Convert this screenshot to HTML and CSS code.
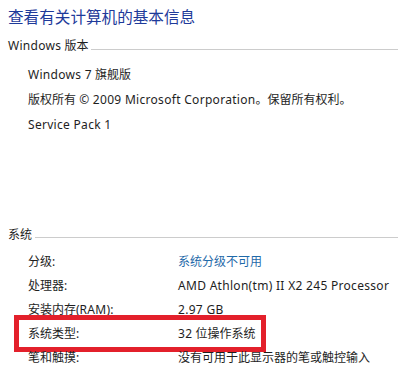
FILE: index.html
```html
<!DOCTYPE html>
<html lang="zh-CN">
<head>
<meta charset="utf-8">
<title>系统</title>
<link rel="stylesheet" href="styles.css">
</head>
<body>
<div class="page">
  <h1 class="title">查看有关计算机的基本信息</h1>

  <section class="group">
    <div class="heading"><span class="en">Windows</span> 版本</div>
    <div class="lines">
      <div class="line"><span class="en">Windows 7</span> 旗舰版</div>
      <div class="line">版权所有 <span class="en">© 2009 Microsoft Corporation</span>。保留所有权利。</div>
      <div class="line"><span class="en">Service Pack 1</span></div>
    </div>
  </section>

  <section class="group system">
    <div class="heading">系统</div>
    <div class="rows">
      <div class="row"><span class="label">分级:</span><span class="value link">系统分级不可用</span></div>
      <div class="row"><span class="label">处理器:</span><span class="value en">AMD Athlon(tm) II X2 245 Processor</span></div>
      <div class="row"><span class="label">安装内存(<span class="en">RAM</span>):</span><span class="value en">2.97 GB</span></div>
      <div class="row highlighted"><span class="label">系统类型:</span><span class="value"><span class="en">32</span> 位操作系统</span><span class="mark"></span></div>
      <div class="row"><span class="label">笔和触摸:</span><span class="value">没有可用于此显示器的笔或触控输入</span></div>
    </div>
  </section>
</div>
</body>
</html>
```

FILE: styles.css
```css
html, body {
  margin: 0;
  padding: 0;
  background: #ffffff;
}

body {
  font-family: "Noto Sans", "Noto Sans CJK SC", sans-serif;
  font-size: 12px;
  color: #1e1e1e;
  width: 399px;
  height: 374px;
  overflow: hidden;
}

.en {
  letter-spacing: 0.3px;
}

.page {
  padding-top: 6px;
}

.title {
  margin: 0;
  padding-left: 8px;
  font-family: "Noto Sans CJK SC", sans-serif;
  font-size: 15.6px;
  font-weight: normal;
  line-height: 20px;
  color: #1e3a9a;
}

.group {
  margin-top: 8px;
}

.heading {
  display: flex;
  align-items: center;
  height: 24px;
  line-height: 24px;
  padding-left: 8px;
  padding-right: 1px;
  white-space: pre;
}

.heading::after {
  content: "";
  flex: 1;
  height: 0;
  border-top: 1px solid #cccccc;
  margin-left: 3px;
  margin-top: 6px;
}

.lines {
  padding-top: 3.5px;
  padding-left: 28px;
}

.line {
  height: 25px;
  line-height: 25px;
  white-space: nowrap;
}

.system {
  margin-top: 86px;
}

.rows {
  padding-top: 3.5px;
}

.row {
  position: relative;
  display: flex;
  height: 24px;
  line-height: 24px;
  padding-left: 28px;
  white-space: nowrap;
}

.label {
  width: 150px;
  flex: none;
}

.value.link {
  color: #1f6aa9;
}

.mark {
  position: absolute;
  left: 14px;
  top: -7.5px;
  width: 242px;
  height: 27px;
  border: 5px solid #e3202b;
}
```
